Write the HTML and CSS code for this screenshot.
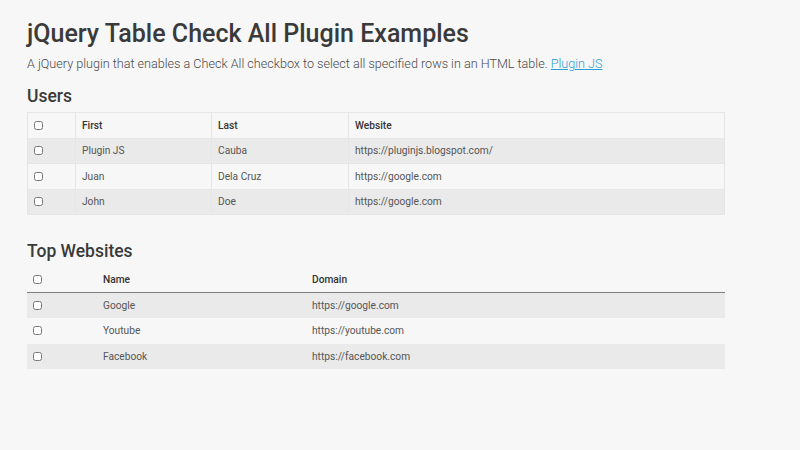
FILE: index.html
```html
<!DOCTYPE html>
<html lang="en">
<head>
  <meta charset="UTF-8" />
  <title>jQuery Table Check All Plugin Examples</title>
  <meta name="viewport" content="width=device-width, initial-scale=1.0" />
  <link rel="stylesheet" href="styles.css">
</head>
<body>

  <div class="container">
    <h1>jQuery Table Check All Plugin Examples</h1>
    <p class="lead">A jQuery plugin that enables a Check All checkbox to select all specified rows in an HTML table. <a href="#">Plugin JS</a></p>

    <h3>Users</h3>
    <table class="table table-bordered" id="users">
      <thead>
        <tr>
          <th class="check-col"><input type="checkbox" class="check-all"></th>
          <th>First</th>
          <th>Last</th>
          <th>Website</th>
        </tr>
      </thead>
      <tbody>
        <tr>
          <td><input type="checkbox"></td>
          <td>Plugin JS</td>
          <td>Cauba</td>
          <td>https://pluginjs.blogspot.com/</td>
        </tr>
        <tr>
          <td><input type="checkbox"></td>
          <td>Juan</td>
          <td>Dela Cruz</td>
          <td>https://google.com</td>
        </tr>
        <tr>
          <td><input type="checkbox"></td>
          <td>John</td>
          <td>Doe</td>
          <td>https://google.com</td>
        </tr>
      </tbody>
    </table>

    <h3>Top Websites</h3>
    <table class="table table-plain" id="websites">
      <thead>
        <tr>
          <th class="check-col"><input type="checkbox" class="check-all"></th>
          <th>Name</th>
          <th>Domain</th>
        </tr>
      </thead>
      <tbody>
        <tr>
          <td><input type="checkbox"></td>
          <td>Google</td>
          <td>https://google.com</td>
        </tr>
        <tr>
          <td><input type="checkbox"></td>
          <td>Youtube</td>
          <td>https://youtube.com</td>
        </tr>
        <tr>
          <td><input type="checkbox"></td>
          <td>Facebook</td>
          <td>https://facebook.com</td>
        </tr>
      </tbody>
    </table>
  </div>

</body>
</html>
```

FILE: styles.css
```css
* {
  box-sizing: border-box;
}

body {
  margin: 0;
  padding: 0;
  font-family: Roboto, 'Noto Sans', sans-serif;
  background: #f7f7f7;
  color: #333;
}

.container {
  width: 698px;
  margin-left: 27px;
  padding-top: 18px;
}

h1 {
  margin: 0 0 5px;
  font-size: 25px;
  font-weight: 500;
  line-height: 32px;
  color: #3a3a3a;
}

.lead {
  margin: 0 0 12px;
  font-size: 12.6px;
  font-weight: 300;
  line-height: 18px;
  color: #4a4a4a;
}

.lead a {
  color: #2a9fd6;
}

h3 {
  margin: 0 0 5px;
  font-size: 17.5px;
  font-weight: 500;
  line-height: 22px;
  color: #3a3a3a;
}

.table {
  width: 100%;
  border-collapse: collapse;
  margin-bottom: 25px;
  font-size: 10.2px;
  color: #555;
}

.table th,
.table td {
  height: 25.5px;
  padding: 0 6px;
  text-align: left;
  vertical-align: middle;
}

.table th {
  font-weight: 500;
  color: #333;
}

.table tbody tr:nth-child(odd) {
  background: #eaeaea;
}

.table input[type="checkbox"] {
  width: 9px;
  height: 9px;
  margin: 0;
  display: block;
}

.table-bordered th,
.table-bordered td {
  border: 1px solid #e6e6e6;
}

.table-bordered .check-col {
  width: 48px;
}

.table-bordered th:nth-child(2) {
  width: 136px;
}

.table-bordered th:nth-child(3) {
  width: 137px;
}

.table-plain thead th {
  border-bottom: 1px solid #808080;
}

.table-plain .check-col {
  width: 70px;
}

.table-plain th:nth-child(2) {
  width: 209px;
}
```
